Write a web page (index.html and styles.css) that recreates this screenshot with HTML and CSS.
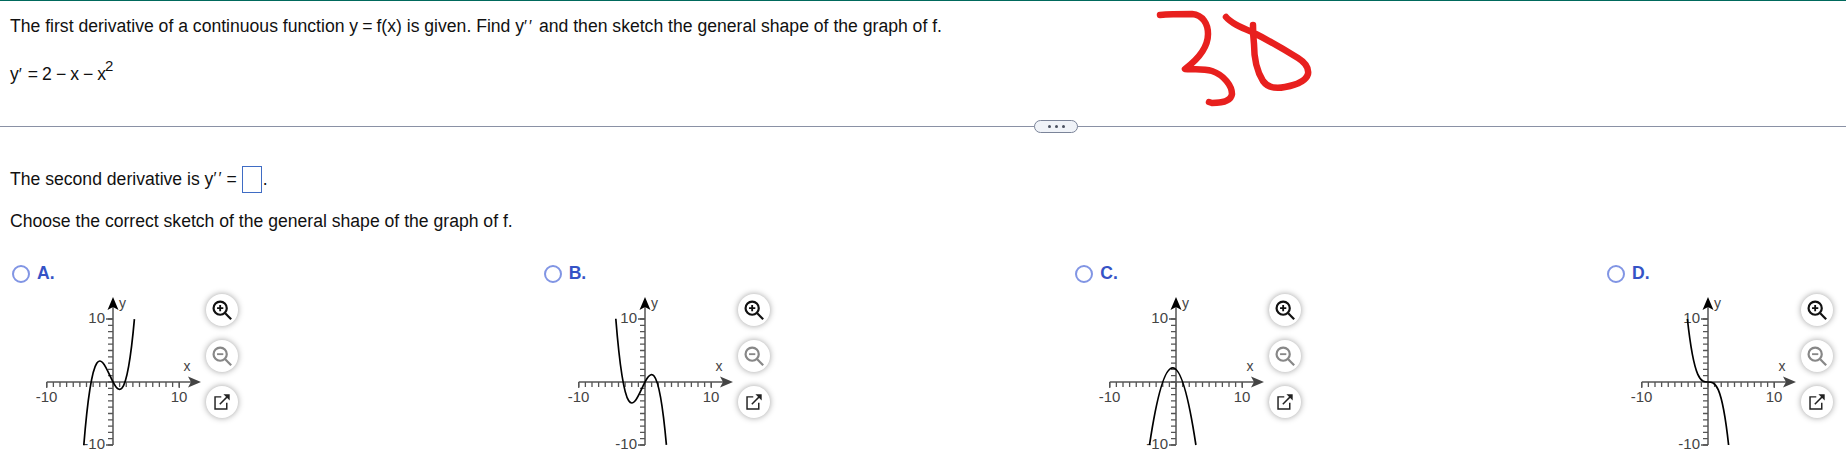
FILE: index.html
```html
<!DOCTYPE html>
<html lang="en">
<head>
<meta charset="utf-8">
<title>Second derivative question</title>
<link rel="stylesheet" href="styles.css">
</head>
<body>
<svg class="defs" width="0" height="0" aria-hidden="true">
  <defs>
    <symbol id="axes" overflow="visible" viewBox="-83 -97 175 170" width="175" height="170">
      <path class="axis" d="M-66.25 0H78M0 -76V63"/>
      <path class="axis major" d="M-66.25 0V6M66.25 0V6M0 -63H-7M0 63H-7"/>
      <path class="ticks" d="M-66.9 2.5H67" stroke-width="5" stroke-dasharray="1.3 5.325"/>
      <path class="ticks" d="M-2.5 -63.65V64" stroke-width="5" stroke-dasharray="1.3 5"/>
      <path class="head-x" d="M88 0L75 -5.5L78 0L75 5.5Z"/>
      <path class="head-y" d="M0 -85L5.5 -72L0 -75L-5.5 -72Z"/>
      <text class="num" x="-66.5" y="20" text-anchor="middle">-10</text>
      <text class="num" x="66" y="20" text-anchor="middle">10</text>
      <text class="num" x="-8" y="-59" text-anchor="end">10</text>
      <text class="num" x="-8" y="67" text-anchor="end">-10</text>
      <text class="var" x="70.5" y="-11">x</text>
      <text class="var" x="6" y="-74">y</text>
    </symbol>
    <symbol id="zoom-in" viewBox="0 0 24 24">
      <circle class="glass" cx="10" cy="10" r="7.2"/>
      <path class="glass" d="M15.5 15.5L22 22" stroke-width="3"/>
      <path class="sign" d="M6.6 10H13.4M10 6.6V13.4"/>
    </symbol>
    <symbol id="zoom-out" viewBox="0 0 24 24">
      <circle class="glass" cx="10" cy="10" r="7.2"/>
      <path class="glass" d="M15.5 15.5L22 22" stroke-width="3"/>
      <path class="sign" d="M6.6 10H13.4"/>
    </symbol>
    <symbol id="popout" viewBox="-3 -3 30 30">
      <path class="pop" d="M11 5H2.5V21.5H18.5V13"/>
      <path class="pop" d="M9 15L20 4"/>
      <path class="pop-head" d="M14 1.5H22.5V10Z"/>
    </symbol>
  </defs>
</svg>

<main class="page">
  <section class="question">
    <p class="line">The first derivative of a continuous function y<span class="eq">=</span>f(x) is given. Find y<span class="primes">′′</span> and then sketch the general shape of the graph of f.</p>
    <p class="line formula">y<span class="primes">′</span><span class="eq">=</span>2<span class="eq">−</span>x<span class="eq">−</span>x<sup class="sup">2</sup></p>
  </section>

  <div class="divider"><span class="pill"><i></i><i></i><i></i></span></div>

  <section class="answer">
    <p class="line second">The second derivative is y<span class="primes">′′</span><span class="eq">=</span><span class="blank"></span>.</p>
    <p class="line choose">Choose the correct sketch of the general shape of the graph of f.</p>
  </section>

  <section class="options">
    <article class="option">
      <label class="choice"><span class="radio"></span><span class="letter">A.</span></label>
      <div class="figure">
        <svg class="chart" viewBox="-83 -97 175 170" width="175" height="170" role="img" aria-label="Graph A">
          <use href="#axes" x="-83" y="-97"/>
          <path class="curve" d="M-29.2 63.3C-12.34 -145.9 4.52 124.2 21.4 -62.9"/>
        </svg>
        <div class="tools">
          <span class="tool"><svg class="icon"><use href="#zoom-in"/></svg></span>
          <span class="tool muted"><svg class="icon"><use href="#zoom-out"/></svg></span>
          <span class="tool"><svg class="icon"><use href="#popout"/></svg></span>
        </div>
      </div>
    </article>
    <article class="option">
      <label class="choice"><span class="radio"></span><span class="letter">B.</span></label>
      <div class="figure">
        <svg class="chart" viewBox="-83 -97 175 170" width="175" height="170" role="img" aria-label="Graph B">
          <use href="#axes" x="-83" y="-97"/>
          <path class="curve" d="M-29.2 -63.3C-12.34 145.9 4.52 -124.2 21.4 62.9"/>
        </svg>
        <div class="tools">
          <span class="tool"><svg class="icon"><use href="#zoom-in"/></svg></span>
          <span class="tool muted"><svg class="icon"><use href="#zoom-out"/></svg></span>
          <span class="tool"><svg class="icon"><use href="#popout"/></svg></span>
        </div>
      </div>
    </article>
    <article class="option">
      <label class="choice"><span class="radio"></span><span class="letter">C.</span></label>
      <div class="figure">
        <svg class="chart" viewBox="-83 -97 175 170" width="175" height="170" role="img" aria-label="Graph C">
          <use href="#axes" x="-83" y="-97"/>
          <path class="curve" d="M-26.5 63Q-3.31 -91.35 19.9 63"/>
        </svg>
        <div class="tools">
          <span class="tool"><svg class="icon"><use href="#zoom-in"/></svg></span>
          <span class="tool muted"><svg class="icon"><use href="#zoom-out"/></svg></span>
          <span class="tool"><svg class="icon"><use href="#popout"/></svg></span>
        </div>
      </div>
    </article>
    <article class="option">
      <label class="choice"><span class="radio"></span><span class="letter">D.</span></label>
      <div class="figure">
        <svg class="chart" viewBox="-83 -97 175 170" width="175" height="170" role="img" aria-label="Graph D">
          <use href="#axes" x="-83" y="-97"/>
          <path class="curve" d="M-20.6 -63C-6.86 62.9 6.86 -62.9 20.6 63"/>
        </svg>
        <div class="tools">
          <span class="tool"><svg class="icon"><use href="#zoom-in"/></svg></span>
          <span class="tool muted"><svg class="icon"><use href="#zoom-out"/></svg></span>
          <span class="tool"><svg class="icon"><use href="#popout"/></svg></span>
        </div>
      </div>
    </article>
  </section>

  <svg class="ink" viewBox="0 0 1846 140" width="1846" height="140" aria-hidden="true">
    <path d="M1160 15C1170 14 1182 14 1192 14C1203 15 1208 24 1208 34C1208 48 1197 60 1185 69C1192 70 1202 68 1212 71C1224 75 1232 86 1232 94C1231 101 1223 103 1212 103L1209 102"/>
    <path d="M1226 17C1231 23 1240 27 1252 32C1268 40 1285 50 1298 58C1306 63 1309 68 1308 74C1306 81 1296 85 1285 87C1275 89 1268 88 1263 81C1258 73 1254 60 1254 44C1253 36 1253 30 1253 25"/>
  </svg>
</main>
</body>
</html>
```

FILE: styles.css
```css
* { box-sizing: border-box; }

html, body {
  margin: 0;
  height: 100%;
  background: #fff;
}

body {
  font-family: "Liberation Sans", Arial, sans-serif;
  font-size: 17.6px;
  color: #111;
  overflow: hidden;
}

.defs { position: absolute; }

.page {
  position: relative;
  width: 1846px;
  height: 457px;
  border-top: 1.5px solid #00695c;
}

p { margin: 0; }

.question {
  height: 124.5px;
  padding: 15px 0 0 10px;
}

.line { line-height: 20px; white-space: nowrap; }

.formula { margin-top: 27px; }

.eq { margin: 0 4px; }
.primes { font-size: 16px; letter-spacing: 2px; }

.sup {
  font-size: 15px;
  line-height: 0;
  vertical-align: 9px;
  margin-left: -1px;
}

/* divider */
.divider {
  display: flex;
  align-items: center;
  height: 1px;
  padding-left: 1034px;
  background: #8a91a5;
}

.pill {
  display: flex;
  align-items: center;
  justify-content: center;
  gap: 4px;
  width: 44px;
  height: 13px;
  border: 1px solid #7b8499;
  border-radius: 7px;
  background: #f0f3f8;
}

.pill i {
  width: 3px;
  height: 3px;
  border-radius: 50%;
  background: #4a5160;
}

/* answer */
.answer { padding: 39px 0 0 10px; }

.second {
  display: flex;
  align-items: center;
  height: 27px;
}

.second .eq { margin: 0 3px; }

.blank {
  display: inline-block;
  width: 20px;
  height: 27px;
  border: 1px solid #3f6cc4;
  margin: 0 1px 0 2px;
}

.choose { margin-top: 18px; }

/* options */
.options {
  display: grid;
  grid-template-columns: repeat(3, 531.67px) 1fr;
  margin-top: 33px;
}

.choice {
  display: flex;
  align-items: center;
  gap: 7px;
  height: 20px;
  padding-left: 12px;
}

.radio {
  width: 18px;
  height: 18px;
  border: 2px solid #8195e4;
  border-radius: 50%;
}

.letter {
  font-weight: bold;
  font-size: 17.6px;
  color: #3553c6;
}

.figure {
  display: flex;
  padding-left: 30px;
  margin-top: 1px;
}

.chart { display: block; flex: none; overflow: visible; }

.axis { fill: none; stroke: #555; stroke-width: 1.5; }
.axis.major { stroke-width: 1.3; }
.ticks { fill: none; stroke: #555; }
.head-x { fill: #444; }
.head-y { fill: #000; }
.num { font-size: 15px; fill: #444; font-family: "Liberation Sans", Arial, sans-serif; }
.var { font-size: 14px; fill: #444; font-family: "Liberation Sans", Arial, sans-serif; }
.curve { fill: none; stroke: #000; stroke-width: 1.7; }

/* zoom / popout buttons */
.tools {
  display: flex;
  flex-direction: column;
  gap: 14px;
  margin: 9px 0 0 1px;
}

.tool {
  display: flex;
  align-items: center;
  justify-content: center;
  width: 32px;
  height: 32px;
  border-radius: 50%;
  background: #fff;
  box-shadow: 0 0 6px rgba(0, 0, 0, .38);
}

.icon { width: 22px; height: 22px; overflow: visible; }

.glass { fill: none; stroke: #111; stroke-width: 2.4; }
.sign { fill: none; stroke: #111; stroke-width: 2; }
.muted .icon { opacity: .5; }
.pop { fill: none; stroke: #222; stroke-width: 2; }
.pop-head { fill: #222; }

/* handwritten note over the page */
.ink {
  position: absolute;
  left: 0;
  top: -1.5px;
  pointer-events: none;
}

.ink path {
  fill: none;
  stroke: #e8201e;
  stroke-width: 6.5;
  stroke-linecap: round;
  stroke-linejoin: round;
}
```
